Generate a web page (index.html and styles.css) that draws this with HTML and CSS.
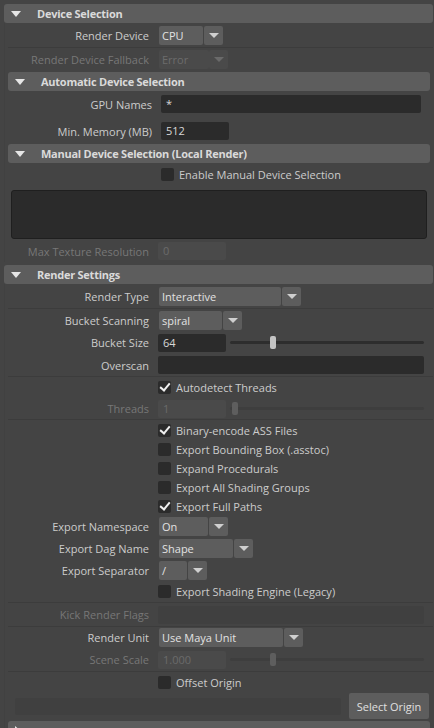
FILE: index.html
```html
<!DOCTYPE html>
<html lang="en">
<head>
<meta charset="UTF-8">
<meta name="viewport" content="width=device-width, initial-scale=1.0">
<title>Render Settings</title>
<link rel="stylesheet" href="styles.css">
</head>
<body>

<div class="panel">

    <!-- Device Selection -->
    <div class="frame">
        <div class="frame-head">
            <svg class="tri" width="10" height="6" viewBox="0 0 10 6"><path d="M0 0H10L5 6Z"/></svg>
            Device Selection
        </div>
        <div class="frame-body">
            <div class="row h24 sep">
                <span class="lbl">Render Device</span>
                <div class="combo w64"><span class="val">CPU</span><span class="arr"></span></div>
            </div>
            <div class="row off">
                <span class="lbl">Render Device Fallback</span>
                <div class="combo w69 dis"><span class="val">Error</span><span class="arr"></span></div>
            </div>

            <div class="frame sub mt2">
                <div class="frame-head">
                    <svg class="tri" width="10" height="6" viewBox="0 0 10 6"><path d="M0 0H10L5 6Z"/></svg>
                    Automatic Device Selection
                </div>
                <div class="frame-body">
                    <div class="row mt2">
                        <span class="lbl">GPU Names</span>
                        <div class="field wide">*</div>
                    </div>
                    <div class="row mt5">
                        <span class="lbl">Min. Memory (MB)</span>
                        <div class="field">512</div>
                    </div>
                </div>
            </div>

            <div class="frame sub mt2">
                <div class="frame-head">
                    <svg class="tri" width="10" height="6" viewBox="0 0 10 6"><path d="M0 0H10L5 6Z"/></svg>
                    Manual Device Selection (Local Render)
                </div>
                <div class="frame-body">
                    <div class="row h23">
                        <span class="lbl"></span>
                        <span class="check"></span>
                        <span class="check-text">Enable Manual Device Selection</span>
                    </div>
                    <div class="device-list"></div>
                </div>
            </div>

            <div class="row off">
                <span class="lbl">Max Texture Resolution</span>
                <div class="field dis">0</div>
            </div>
        </div>
    </div>

    <!-- Render Settings -->
    <div class="frame mt3">
        <div class="frame-head">
            <svg class="tri" width="10" height="6" viewBox="0 0 10 6"><path d="M0 0H10L5 6Z"/></svg>
            Render Settings
        </div>
        <div class="frame-body">
            <div class="row h24 sep">
                <span class="lbl">Render Type</span>
                <div class="combo w142"><span class="val">Interactive</span><span class="arr"></span></div>
            </div>
            <div class="row">
                <span class="lbl">Bucket Scanning</span>
                <div class="combo w83"><span class="val">spiral</span><span class="arr"></span></div>
            </div>
            <div class="row h23">
                <span class="lbl">Bucket Size</span>
                <div class="field">64</div>
                <div class="slider"><span class="knob" style="left: 40px"></span></div>
            </div>
            <div class="row sep">
                <span class="lbl">Overscan</span>
                <div class="field wide"></div>
            </div>
            <div class="row h21">
                <span class="lbl"></span>
                <span class="check on"></span>
                <span class="check-text">Autodetect Threads</span>
            </div>
            <div class="row h21 sep off">
                <span class="lbl">Threads</span>
                <div class="field dis">1</div>
                <div class="slider dis"><span class="knob" style="left: 2px"></span></div>
            </div>

            <div class="checks">
                <div class="row h19">
                    <span class="lbl"></span>
                    <span class="check on"></span>
                    <span class="check-text">Binary-encode ASS Files</span>
                </div>
                <div class="row h19">
                    <span class="lbl"></span>
                    <span class="check"></span>
                    <span class="check-text">Export Bounding Box (.asstoc)</span>
                </div>
                <div class="row h19">
                    <span class="lbl"></span>
                    <span class="check"></span>
                    <span class="check-text">Expand Procedurals</span>
                </div>
                <div class="row h19">
                    <span class="lbl"></span>
                    <span class="check"></span>
                    <span class="check-text">Export All Shading Groups</span>
                </div>
                <div class="row h19">
                    <span class="lbl"></span>
                    <span class="check on"></span>
                    <span class="check-text">Export Full Paths</span>
                </div>
            </div>

            <div class="row h21">
                <span class="lbl">Export Namespace</span>
                <div class="combo w69"><span class="val">On</span><span class="arr"></span></div>
            </div>
            <div class="row h23">
                <span class="lbl">Export Dag Name</span>
                <div class="combo w94"><span class="val">Shape</span><span class="arr"></span></div>
            </div>
            <div class="row h21">
                <span class="lbl">Export Separator</span>
                <div class="combo w48"><span class="val">/</span><span class="arr"></span></div>
            </div>
            <div class="row h21 sep">
                <span class="lbl"></span>
                <span class="check"></span>
                <span class="check-text">Export Shading Engine (Legacy)</span>
            </div>
            <div class="row h23 sep off">
                <span class="lbl">Kick Render Flags</span>
                <div class="field wide flat"></div>
            </div>
            <div class="row h21">
                <span class="lbl">Render Unit</span>
                <div class="combo w144"><span class="val">Use Maya Unit</span><span class="arr"></span></div>
            </div>
            <div class="row h23 sep off">
                <span class="lbl">Scene Scale</span>
                <div class="field dis">1.000</div>
                <div class="slider dis"><span class="knob" style="left: 40px"></span></div>
            </div>
            <div class="row h21">
                <span class="lbl"></span>
                <span class="check"></span>
                <span class="check-text">Offset Origin</span>
            </div>
            <div class="origin-row">
                <div class="field flat origin-field"></div>
                <button class="btn">Select Origin</button>
            </div>

            <div class="frame sub mt2">
                <div class="frame-head">
                    <svg class="tri" width="6" height="10" viewBox="0 0 6 10"><path d="M0 0V10L6 5Z"/></svg>
                </div>
            </div>
        </div>
    </div>

</div>

</body>
</html>
```

FILE: styles.css
```css
body {
    margin: 0;
    background-color: #444444;
    font-family: "Open Sans", "Noto Sans", sans-serif;
    font-size: 11px;
    color: #cccccc;
    overflow: hidden;
}

.panel {
    padding: 4px 1px 0 4px;
}

.frame-head {
    display: flex;
    align-items: center;
    height: 19px;
    background-color: #5d5d5d;
    border-radius: 3px;
    font-weight: bold;
    letter-spacing: -0.25px;
    color: #dadada;
}

.tri {
    fill: #e6e6e6;
    margin: 0 16px 0 7px;
}

.frame-body {
    border-left: 1px solid #414141;
}

.sub {
    margin: 0 3px 0 3px;
}

.sub .frame-body {
    border-left: none;
}

.row {
    display: flex;
    align-items: center;
    height: 22px;
    margin-left: 3px;
    padding-right: 9px;
}

.h19 { height: 19px; }
.h21 { height: 21px; }
.h23 { height: 23px; }
.h24 { height: 24px; }

.mt2 { margin-top: 2px; }
.mt3 { margin-top: 3px; }
.mt5 { margin-top: 5px; }

.sep {
    border-bottom: 1px solid #3c3c3c;
}

.lbl {
    flex: none;
    width: 141px;
    margin-right: 9px;
    text-align: right;
    white-space: nowrap;
}

.off .lbl {
    color: #777777;
}

.field {
    flex: none;
    box-sizing: border-box;
    width: 68px;
    height: 18px;
    line-height: 18px;
    padding-left: 5px;
    background-color: #2b2b2b;
    border-radius: 2px;
    color: #d8d8d8;
}

.field.wide {
    flex: 1;
    width: auto;
}

.field.flat {
    background-color: #404040;
}

.field.dis {
    background-color: #4a4a4a;
    color: #6a6a6a;
}

.combo {
    flex: none;
    display: flex;
    height: 19px;
    margin-left: 1px;
}

.combo .val {
    flex: 1;
    line-height: 19px;
    padding-left: 3px;
    background-color: #5d5d5d;
    border-radius: 2px;
    color: #e2e2e2;
}

.combo .arr {
    width: 19px;
    margin-left: 1px;
    background-color: #5d5d5d;
    border-radius: 2px;
    position: relative;
}

.combo .arr::after {
    content: "";
    position: absolute;
    left: 5px;
    top: 7px;
    border-left: 5px solid transparent;
    border-right: 5px solid transparent;
    border-top: 5px solid #cfcfcf;
}

.combo.dis .val,
.combo.dis .arr {
    background-color: #4a4a4a;
    color: #6c6c6c;
}

.combo.dis .arr {
    margin-left: 0;
}

.combo.dis .arr::after {
    border-top-color: #6a6a6a;
}

.w48 { width: 48px; }
.w64 { width: 64px; }
.w69 { width: 69px; }
.w83 { width: 83px; }
.w94 { width: 94px; }
.w142 { width: 142px; }
.w144 { width: 144px; }

.slider {
    flex: 1;
    height: 3px;
    margin-left: 4px;
    background-color: #2d2d2d;
    border-radius: 2px;
    position: relative;
}

.knob {
    position: absolute;
    top: -5px;
    width: 6px;
    height: 13px;
    background-color: #c4c4c4;
    border-radius: 2px;
}

.slider.dis {
    background-color: #3e3e3e;
}

.slider.dis .knob {
    background-color: #5e5e5e;
}

.check {
    flex: none;
    width: 13px;
    height: 13px;
    background-color: #2b2b2b;
    border-radius: 2px;
    position: relative;
}

.check.on::after {
    content: "";
    position: absolute;
    left: 4px;
    top: 0;
    width: 4px;
    height: 8px;
    border-right: 2px solid #f0f0f0;
    border-bottom: 2px solid #f0f0f0;
    transform: rotate(40deg);
}

.check-text {
    margin-left: 5px;
    color: #cccccc;
    white-space: nowrap;
}

.checks {
    padding-top: 1px;
}

.device-list {
    height: 47px;
    margin: 4px 3px 1px 3px;
    background-color: #2b2b2b;
    border: 1px solid #1f1f1f;
    border-radius: 3px;
}

.origin-row {
    display: flex;
    align-items: center;
    height: 26px;
    margin-left: 10px;
    padding-right: 4px;
}

.origin-field {
    flex: 1;
    height: 17px;
}

.btn {
    flex: none;
    width: 80px;
    height: 26px;
    margin-left: 8px;
    padding: 0;
    border: none;
    border-radius: 2px;
    background-color: #5d5d5d;
    color: #e0e0e0;
    font-family: inherit;
    font-size: 11px;
}
```
